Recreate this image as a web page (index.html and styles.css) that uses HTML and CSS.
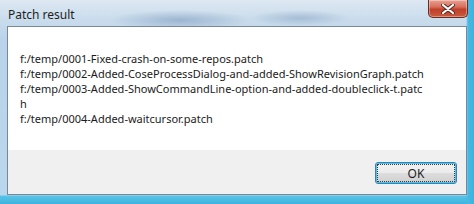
FILE: index.html
```html
<!DOCTYPE html>
<html lang="en">
<head>
    <meta charset="UTF-8">
    <title>Patch result</title>
    <link rel="stylesheet" href="styles.css">
</head>
<body>
    <div class="window">
        <div class="titlebar">
            <span class="title">Patch result</span>
            <button class="close-btn" aria-label="Close">
                <svg width="14" height="10" viewBox="0 0 14 10">
                    <path d="M2 1 L12 9 M12 1 L2 9" stroke="#5a2a24" stroke-width="4" stroke-linecap="round"/>
                    <path d="M2 1 L12 9 M12 1 L2 9" stroke="#ffffff" stroke-width="2.2" stroke-linecap="round"/>
                </svg>
            </button>
        </div>

        <div class="client">
            <div class="output">
                <div>f:/temp/0001-Fixed-crash-on-some-repos.patch</div>
                <div>f:/temp/0002-Added-CoseProcessDialog-and-added-ShowRevisionGraph.patch</div>
                <div>f:/temp/0003-Added-ShowCommandLine-option-and-added-doubleclick-t.patc</div>
                <div>h</div>
                <div>f:/temp/0004-Added-waitcursor.patch</div>
            </div>
            <div class="footer">
                <button class="ok-btn"><span class="focus-ring">OK</span></button>
            </div>
        </div>
    </div>
</body>
</html>
```

FILE: styles.css
```css
body {
    margin: 0;
    padding: 0;
    width: 474px;
    height: 204px;
    overflow: hidden;
    font-family: "Noto Sans", "Open Sans", sans-serif;
}

.window {
    width: 474px;
    height: 204px;
    box-sizing: border-box;
    padding: 0 7px 9px 7px;
    display: flex;
    flex-direction: column;
    background:
        linear-gradient(90deg, rgba(255,255,255,0) 0, rgba(255,255,255,0) 466px, #46b9e2 468px, #3ab3df 474px),
        linear-gradient(180deg, rgba(255,255,255,0) 0, rgba(255,255,255,0) 195px, #58c3e6 196px, #3eb4df 204px),
        radial-gradient(ellipse 70px 10px at 180px 20px, rgba(120,150,185,0.55), rgba(120,150,185,0)),
        radial-gradient(ellipse 50px 8px at 300px 18px, rgba(120,150,185,0.45), rgba(120,150,185,0)),
        linear-gradient(180deg, #dde8f2 0, #c9dcec 20px, #b8d3ea 40px, #b9d7ee 100%);
}

.titlebar {
    height: 26px;
    flex: none;
    display: flex;
    justify-content: space-between;
    align-items: flex-start;
}

.title {
    font-size: 12px;
    color: #1e1e1e;
    margin-top: 6px;
    margin-left: 1px;
}

.close-btn {
    width: 40px;
    height: 18px;
    margin-right: -1px;
    padding: 0;
    border: 1px solid #6b2a22;
    border-top: none;
    border-radius: 0 0 5px 5px;
    background: linear-gradient(180deg, #e9a295 0, #d8705d 40%, #c1402a 55%, #c85a3e 100%);
    box-shadow: inset 0 0 0 1px rgba(255,255,255,0.35);
    display: flex;
    align-items: center;
    justify-content: center;
}

.client {
    flex: 1;
    display: flex;
    flex-direction: column;
    border: 1px solid #7a8896;
    background-color: #f0f0f0;
}

.output {
    height: 123px;
    background-color: #ffffff;
    padding: 24px 0 0 12px;
    box-sizing: border-box;
    font-size: 11px;
    line-height: 15px;
    color: #1b1b1b;
}

.footer {
    flex: 1;
    display: flex;
    justify-content: flex-end;
    align-items: flex-start;
    padding: 12px 9px 0 0;
}

.ok-btn {
    width: 82px;
    height: 22px;
    padding: 2px;
    border: 1px solid #3c7fb1;
    border-radius: 3px;
    background: linear-gradient(180deg, #f2f2f2 0, #ebebeb 50%, #dddddd 51%, #cfcfcf 100%);
    box-shadow: inset 0 0 0 1px #48c6f2;
    font-family: inherit;
    font-size: 12px;
    color: #1b1b1b;
}

.focus-ring {
    display: flex;
    align-items: center;
    justify-content: center;
    height: 100%;
    outline: 1px dotted #3a3a3a;
}
```
